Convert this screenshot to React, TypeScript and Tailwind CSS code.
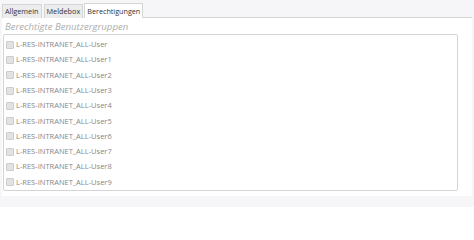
import React from "react";

const groups = [
  "L-RES-INTRANET_ALL-User",
  "L-RES-INTRANET_ALL-User1",
  "L-RES-INTRANET_ALL-User2",
  "L-RES-INTRANET_ALL-User3",
  "L-RES-INTRANET_ALL-User4",
  "L-RES-INTRANET_ALL-User5",
  "L-RES-INTRANET_ALL-User6",
  "L-RES-INTRANET_ALL-User7",
  "L-RES-INTRANET_ALL-User8",
  "L-RES-INTRANET_ALL-User9",
];

export default function App() {
  return (
    <div
      className="w-[474px] h-[207px] bg-[#f6f6f8] pt-[3px] pl-[2px] pr-[2px] overflow-hidden"
      style={{ fontFamily: '"Open Sans", sans-serif' }}
    >
      <div className="flex items-end h-[15px]">
        <div className="h-[14px] px-[2px] mr-[2px] flex items-center bg-[#ececec] border border-[#d6d6d6] border-b-0 text-[7.3px] text-[#333]">
          Allgemein
        </div>
        <div className="h-[14px] px-[2px] mr-[1px] flex items-center bg-[#ececec] border border-[#d6d6d6] border-b-0 text-[7.3px] text-[#333]">
          Meldebox
        </div>
        <div className="h-[15px] px-[2px] flex items-center bg-white border border-[#d6d6d6] border-b-0 text-[7.2px] text-[#333]">
          Berechtigungen
        </div>
        <div className="flex-1 h-[15px] border-b border-[#d6d6d6]" />
      </div>
      <div className="bg-white pl-[1px] pr-[14px] pb-[5px]">
        <div className="text-[9.6px] italic text-[#adadad] pl-[2px] h-[16px] leading-[17px]">
          Berechtigte Benutzergruppen
        </div>
        <div className="border border-[#d4d4d4] rounded-[2px] pt-[2px]">
          {groups.map((g) => (
            <div key={g} className="h-[15.3px] flex items-center pl-[2px]">
              <span className="w-[8px] h-[8px] bg-[#e2e2e2] border border-[#cccccc] rounded-[1px] mr-[2px]" />
              <span className="text-[7.5px] text-[#878787]">{g}</span>
            </div>
          ))}
        </div>
      </div>
    </div>
  );
}
